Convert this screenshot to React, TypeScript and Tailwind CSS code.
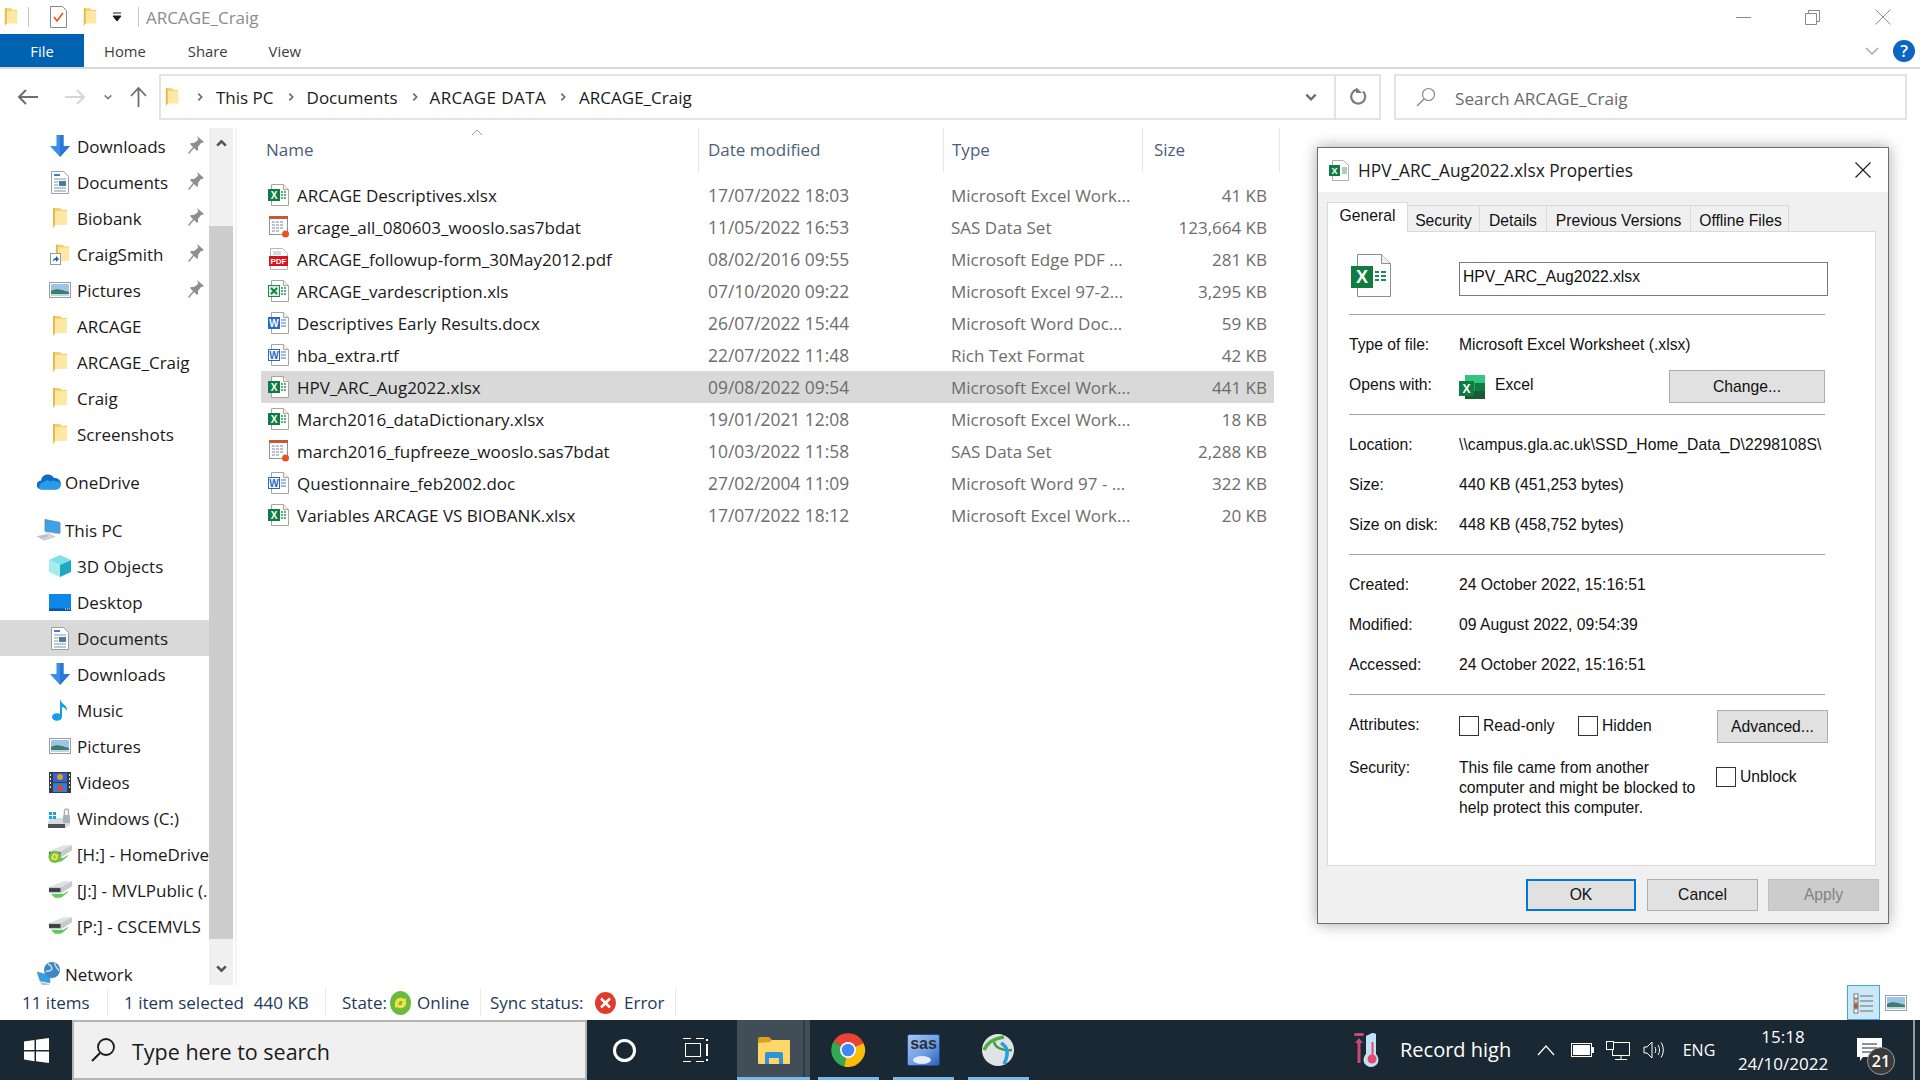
import React from "react";

// ---------- small icons ----------
const Folder = ({ w = 16, h = 22 }: { w?: number; h?: number }) => (
  <svg width={w} height={h} viewBox="0 0 16 22">
    <path d="M1 1h7l2 2h5v15H3l-2 3z" fill="#f5cf6b" />
    <path d="M3 4h12v14H3z" fill="#ffe8a3" />
    <path d="M1 1h2v17l-2 3z" fill="#e8b94a" />
  </svg>
);

const Pin = () => (
  <svg width="18" height="20" viewBox="0 0 18 20">
    <path d="M10 1l7 6-2 1-1 0-3 4 0 3-1 1-3-3-5 6-1-1 5-6-3-3 1-1 3 0 4-3 0-1z" fill="#8f8f8f" />
  </svg>
);

const DownloadArrow = () => (
  <svg width="20" height="22" viewBox="0 0 20 22">
    <path d="M6.5 0h7v11H20L10 22 0 11h6.500z" fill="#3b8fe8" />
    <path d="M10 0h3.500v11H20L10 22z" fill="#2a78d6" />
  </svg>
);

const DocIcon = () => (
  <svg width="18" height="23" viewBox="0 0 18 23">
    <path d="M.5.5h12l5 5v17H.5z" fill="#fff" stroke="#9aa0a8" />
    <path d="M3 8h12M3 17h12M3 20h12" stroke="#7d93ad" />
    <path d="M3 4h6" stroke="#3a7fd5" strokeWidth="2" />
    <rect x="8" y="10" width="7" height="5" fill="#4a7a9c" />
    <path d="M3 11h4M3 14h4" stroke="#7d93ad" />
  </svg>
);

const PictureIcon = ({ w = 22, h = 16 }: { w?: number; h?: number }) => (
  <svg width={w} height={h} viewBox="0 0 22 16">
    <rect x=".5" y=".5" width="21" height="15" fill="#fff" stroke="#9d9d9d" />
    <rect x="2" y="2" width="18" height="12" fill="#9cc6e8" />
    <path d="M2 9c5-3 9-2 18 1v4H2z" fill="#3f7d6a" />
    <path d="M2 12h18v2H2z" fill="#b9d8ec" />
  </svg>
);

const ShortcutFolder = () => (
  <div className="relative w-[20px] h-[22px]">
    <div className="absolute left-[5px] top-0">
      <Folder w={15} h={22} />
    </div>
    <svg className="absolute left-0 bottom-0" width="11" height="12" viewBox="0 0 11 12">
      <rect x=".5" y=".5" width="10" height="11" fill="#fff" stroke="#999" />
      <path d="M3 9c0-3 1-4 3-4V3l3 3-3 3V7c-1 0-2 0-3 2z" fill="#1e5fb4" />
    </svg>
  </div>
);

const Cloud = () => (
  <svg width="24" height="16" viewBox="0 0 24 16">
    <path d="M4.500 15.500a4.500 4.500 0 0 1-.5-9 7 7 0 0 1 13-2.500 5.500 5.500 0 0 1 2 11.500z" fill="#0f6cc0" />
    <path d="M3 15a4 4 0 0 1 1.500-6l6-3 3 1.500a5 5 0 0 1 6 0 4.200 4.200 0 0 1 4 4 4 4 0 0 1-4.500 4H4.500z" fill="#2b9be8" />
  </svg>
);

const Pc = () => (
  <svg width="24" height="22" viewBox="0 0 24 22">
    <path d="M8 .5l15 3v11l-15-2z" fill="#3aa3ea" stroke="#6b8296" strokeWidth=".8" />
    <path d="M8 12.500l15 2 0 1-15-2z" fill="#c7cdd2" />
    <path d="M.5 17.500l11-2.500 6 2.500-10 3.500z" fill="#d4d8dc" stroke="#a3abb3" strokeWidth=".6" />
    <path d="M3 18l7-1.500M4 19l7-2" stroke="#a3abb3" strokeWidth=".6" />
  </svg>
);

const Cube = () => (
  <svg width="22" height="22" viewBox="0 0 22 22">
    <path d="M11 0l11 5-11 5L0 5z" fill="#7fe0e8" />
    <path d="M0 5l11 5v12L0 17z" fill="#a6ecec" />
    <path d="M22 5l-11 5v12l11-5z" fill="#1fa8c6" />
  </svg>
);

const DesktopIcon = () => (
  <svg width="22" height="17" viewBox="0 0 22 17">
    <rect width="22" height="17" fill="#0f86e8" />
    <rect y="14.500" width="22" height="2.500" fill="#0a55a8" />
    <path d="M16 15h1M18 15h1M20 15h1" stroke="#fff" />
  </svg>
);

const Music = () => (
  <svg width="16" height="22" viewBox="0 0 16 22">
    <ellipse cx="5" cy="18" rx="5" ry="3.800" fill="#1b9be8" />
    <path d="M8 18V0c1 5 8 6 7 12-1-3-4-4-5-4v10z" fill="#1b9be8" />
  </svg>
);

const VideoIcon = () => (
  <svg width="22" height="21" viewBox="0 0 22 21">
    <rect width="22" height="21" fill="#3a3a3a" />
    <rect x="4" y="1" width="14" height="9" fill="#2f62d8" />
    <rect x="4" y="11" width="14" height="9" fill="#2f7de0" />
    <circle cx="11" cy="5" r="3" fill="#e0a020" />
    <circle cx="11" cy="16" r="3" fill="#d84a2a" />
    <path d="M1.500 2v2M1.500 6v2M1.500 10v2M1.500 14v2M20.500 2v2M20.500 6v2M20.500 10v2M20.500 14v2" stroke="#eee" />
  </svg>
);

const CDrive = () => (
  <svg width="24" height="21" viewBox="0 0 24 21">
    <path d="M0 14l4-4h18v7l-4 3H0z" fill="#d7dadd" />
    <path d="M0 16h17v4H0z" fill="#4e5257" />
    <rect x="1" y="4" width="3" height="3" fill="#13a2ea" />
    <rect x="5" y="4" width="3" height="3" fill="#13a2ea" />
    <rect x="1" y="8" width="3" height="3" fill="#13a2ea" />
    <rect x="5" y="8" width="3" height="3" fill="#13a2ea" />
    <rect x="15" y="7" width="7" height="8" rx="1" fill="#a8b2bc" />
    <path d="M16.500 7V3a2 2 0 0 1 4 0v4" fill="none" stroke="#a8b2bc" strokeWidth="1.500" />
  </svg>
);

const NetDrive = ({ sync }: { sync?: boolean }) => (
  <svg width="25" height="20" viewBox="0 0 25 20">
    <path d="M1 7L16 1h9v5L14 12H1z" fill="#dfe2e5" />
    <path d="M1 7h13l11-6v5L14 13H1z" fill="#c6cacd" />
    <path d="M1 8h12v4H1z" fill="#3b3e42" />
    <path d="M3 14h13l5-3v1l-6 5-2 1H7z" fill="#62c85f" />
    {sync && (
      <>
        <circle cx="7" cy="13" r="6.500" fill="#72bf44" />
        <path d="M3.500 13a3.500 3.500 0 0 1 6-2.500l1-1v4H7l1.300-1.300a2 2 0 0 0-3.300.800z" fill="#f0e14a" />
        <path d="M10.500 13a3.500 3.500 0 0 1-6 2.500l-1 1v-4H7l-1.300 1.300a2 2 0 0 0 3.300-.800z" fill="#f0e14a" />
      </>
    )}
  </svg>
);

const NetworkIcon = () => (
  <svg width="24" height="24" viewBox="0 0 24 24">
    <path d="M0 10l13 3v8L3 19z" fill="#2f9fea" stroke="#8096a8" strokeWidth=".6" />
    <path d="M3 20l9 2v2l-7-1z" fill="#b9bfc5" />
    <circle cx="15" cy="8" r="8" fill="#3f86c4" />
    <path d="M11 2c3 1 5 4 3 6s-4 0-5 2M18 1c-1 3 2 4 4 8" stroke="#c5dff0" strokeWidth="1.500" fill="none" />
  </svg>
);

const Page = ({ children }: { children: React.ReactNode }) => (
  <svg width="21" height="22" viewBox="0 0 21 22">
    <path d="M3.500.5h12l5 5v16h-17z" fill="#fff" stroke="#a5a5a5" />
    <path d="M15.500.5v5h5" fill="#f3f3f3" stroke="#a5a5a5" />
    {children}
  </svg>
);

const GridLines = ({ color }: { color: string }) => (
  <path d="M13 8h2M16 8h2M13 11h2M16 11h2M13 14h2M16 14h2" stroke={color} strokeWidth="1.500" />
);

const XlsxFile = () => (
  <Page>
    <GridLines color="#2b8a57" />
    <rect x="0" y="5" width="12" height="12" fill="#107c41" />
    <text x="6" y="15" textAnchor="middle" fontSize="10" fontWeight="700" fill="#fff" fontFamily="Liberation Sans">X</text>
  </Page>
);

const XlsFile = () => (
  <Page>
    <GridLines color="#2b8a57" />
    <rect x=".5" y="5.500" width="11" height="11" fill="#d5efdc" stroke="#1d8a4b" />
    <path d="M3 8l6 6M9 8l-6 6" stroke="#107c41" strokeWidth="1.800" />
  </Page>
);

const WordFile = ({ outline }: { outline?: boolean }) => (
  <Page>
    <path d="M13 8h5M13 11h5M13 14h5" stroke="#3a78c9" strokeWidth="1.200" />
    <rect x={outline ? 0.5 : 0} y={outline ? 5.5 : 5} width={outline ? 11 : 12} height={outline ? 11 : 12} fill={outline ? "#fff" : "#2b66c8"} stroke={outline ? "#2b66c8" : "none"} />
    <text x="6" y="15" textAnchor="middle" fontSize="10" fontWeight="700" fill={outline ? "#2b66c8" : "#fff"} fontFamily="Liberation Sans">W</text>
  </Page>
);

const PdfFile = () => (
  <svg width="21" height="22" viewBox="0 0 21 22">
    <path d="M2.500.5h12l5 5v16h-17z" fill="#fff" stroke="#b5b5b5" />
    <path d="M5 4h8M5 6h8" stroke="#b5b5b5" />
    <rect x="1" y="8" width="19" height="10" fill="#d9141e" />
    <text x="10.500" y="16" textAnchor="middle" fontSize="8" fontWeight="700" fill="#fff" fontFamily="Liberation Sans">PDF</text>
  </svg>
);

const SasFile = () => (
  <svg width="21" height="22" viewBox="0 0 21 22">
    <rect x="1.500" y=".5" width="18" height="18" fill="#fff" stroke="#8a93a0" />
    <rect x="1" y="0" width="19" height="3" fill="#c9592e" />
    <path d="M4 6h3M8 6h3M12 6h3M4 9h3M8 9h3M12 9h3M4 12h3M8 12h3M12 12h3M4 15h3M8 15h3" stroke="#7d8794" />
    <circle cx="17.500" cy="18" r="3.500" fill="#e0562a" />
  </svg>
);

const XlsxLarge = () => (
  <svg width="40" height="44" viewBox="0 0 40 44">
    <path d="M6.500.5h24l9 9v33h-33z" fill="#fdfdfd" stroke="#8e8e8e" />
    <path d="M30.500.5v9h9" fill="#f0f0f0" stroke="#8e8e8e" />
    <path d="M24 18h4M30 18h5M24 22h4M30 22h5M24 26h4M30 26h5" stroke="#1f8a55" strokeWidth="2" />
    <rect x="0" y="12" width="22" height="22" fill="#107c41" />
    <text x="11" y="29" textAnchor="middle" fontSize="18" fontWeight="700" fill="#fff" fontFamily="Liberation Sans">X</text>
  </svg>
);

const XlsxTiny = () => (
  <svg width="20" height="21" viewBox="0 0 20 21">
    <path d="M3.500.5h11l5 5v15h-16z" fill="#fff" stroke="#b0b0b0" />
    <path d="M13 7h5v7h-5z" fill="#b5c9bc" />
    <rect x="0" y="5" width="11" height="11" fill="#107c41" />
    <text x="5.500" y="14" textAnchor="middle" fontSize="9" fontWeight="700" fill="#fff" fontFamily="Liberation Sans">X</text>
  </svg>
);

const ExcelApp = () => (
  <svg width="26" height="24" viewBox="0 0 26 24">
    <path d="M6 0h20v8H6z" fill="#33c481" />
    <path d="M6 8h20v8H6z" fill="#21a366" />
    <path d="M6 16h20v8H6z" fill="#185c37" />
    <path d="M16 8h10v8H16z" fill="#107c41" />
    <rect x="0" y="6" width="15" height="15" fill="#107c41" />
    <text x="7.500" y="18" textAnchor="middle" fontSize="12" fontWeight="700" fill="#fff" fontFamily="Liberation Sans">X</text>
  </svg>
);

const SyncBadge = () => (
  <svg width="21" height="24" viewBox="0 0 21 24">
    <ellipse cx="10.500" cy="12" rx="10.500" ry="12" fill="#6cbb3c" />
    <path d="M5 12a5.500 5.500 0 0 1 9-4l2-1v6h-5l2-2a3 3 0 0 0-5 1z" fill="#f4e24a" />
    <path d="M16 12a5.500 5.500 0 0 1-9 4l-2 1v-6h5l-2 2a3 3 0 0 0 5-1z" fill="#f4e24a" />
  </svg>
);

const ErrorBadge = () => (
  <svg width="21" height="22" viewBox="0 0 21 22">
    <ellipse cx="10.500" cy="11" rx="10.500" ry="11" fill="#e23b2e" />
    <path d="M6 6.500l9 9M15 6.500l-9 9" stroke="#fff" strokeWidth="2.500" />
  </svg>
);

const Chev = ({ d, color = "#6b6b6b", w = 12, h = 12, sw = 2 }: { d: string; color?: string; w?: number; h?: number; sw?: number }) => (
  <svg width={w} height={h} viewBox="0 0 12 12" preserveAspectRatio="none">
    <path d={d} fill="none" stroke={color} strokeWidth={sw} />
  </svg>
);
const DOWN = "M2 4l4 4 4-4";
const UP = "M2 8l4-4 4 4";
const RIGHT = "M4 2l4 4-4 4";

// ---------- data ----------
type NavItem = { label: string; icon: React.ReactNode; top?: boolean; pin?: boolean; active?: boolean };

const quick: NavItem[] = [
  { label: "Downloads", icon: <DownloadArrow />, pin: true },
  { label: "Documents", icon: <DocIcon />, pin: true },
  { label: "Biobank", icon: <Folder />, pin: true },
  { label: "CraigSmith", icon: <ShortcutFolder />, pin: true },
  { label: "Pictures", icon: <PictureIcon />, pin: true },
  { label: "ARCAGE", icon: <Folder /> },
  { label: "ARCAGE_Craig", icon: <Folder /> },
  { label: "Craig", icon: <Folder /> },
  { label: "Screenshots", icon: <Folder /> },
];

const thisPc: NavItem[] = [
  { label: "This PC", icon: <Pc />, top: true },
  { label: "3D Objects", icon: <Cube /> },
  { label: "Desktop", icon: <DesktopIcon /> },
  { label: "Documents", icon: <DocIcon />, active: true },
  { label: "Downloads", icon: <DownloadArrow /> },
  { label: "Music", icon: <Music /> },
  { label: "Pictures", icon: <PictureIcon /> },
  { label: "Videos", icon: <VideoIcon /> },
  { label: "Windows (C:)", icon: <CDrive /> },
  { label: "[H:] - HomeDrive", icon: <NetDrive sync /> },
  { label: "[J:] - MVLPublic (.", icon: <NetDrive /> },
  { label: "[P:] - CSCEMVLS", icon: <NetDrive /> },
];

const files = [
  { name: "ARCAGE Descriptives.xlsx", date: "17/07/2022 18:03", type: "Microsoft Excel Work...", size: "41 KB", icon: <XlsxFile /> },
  { name: "arcage_all_080603_wooslo.sas7bdat", date: "11/05/2022 16:53", type: "SAS Data Set", size: "123,664 KB", icon: <SasFile /> },
  { name: "ARCAGE_followup-form_30May2012.pdf", date: "08/02/2016 09:55", type: "Microsoft Edge PDF ...", size: "281 KB", icon: <PdfFile /> },
  { name: "ARCAGE_vardescription.xls", date: "07/10/2020 09:22", type: "Microsoft Excel 97-2...", size: "3,295 KB", icon: <XlsFile /> },
  { name: "Descriptives Early Results.docx", date: "26/07/2022 15:44", type: "Microsoft Word Doc...", size: "59 KB", icon: <WordFile /> },
  { name: "hba_extra.rtf", date: "22/07/2022 11:48", type: "Rich Text Format", size: "42 KB", icon: <WordFile outline /> },
  { name: "HPV_ARC_Aug2022.xlsx", date: "09/08/2022 09:54", type: "Microsoft Excel Work...", size: "441 KB", icon: <XlsxFile />, selected: true },
  { name: "March2016_dataDictionary.xlsx", date: "19/01/2021 12:08", type: "Microsoft Excel Work...", size: "18 KB", icon: <XlsxFile /> },
  { name: "march2016_fupfreeze_wooslo.sas7bdat", date: "10/03/2022 11:58", type: "SAS Data Set", size: "2,288 KB", icon: <SasFile /> },
  { name: "Questionnaire_feb2002.doc", date: "27/02/2004 11:09", type: "Microsoft Word 97 - ...", size: "322 KB", icon: <WordFile outline /> },
  { name: "Variables ARCAGE VS BIOBANK.xlsx", date: "17/07/2022 18:12", type: "Microsoft Excel Work...", size: "20 KB", icon: <XlsxFile /> },
];

// ---------- parts ----------
const TitleBar = () => (
  <div className="h-[34px] flex items-center relative">
    <div className="ml-[4px] w-[24px]"><Folder w={14} h={20} /></div>
    <div className="w-px h-[20px] bg-[#c8c8c8]" />
    <div className="ml-[21px] w-[33px]">
      <svg width="17" height="22" viewBox="0 0 17 22">
        <path d="M.5.5h12l4 4v17H.5z" fill="#fff" stroke="#8a8a8a" />
        <path d="M4 11l3 4 6-8" fill="none" stroke="#e8501e" strokeWidth="1.600" />
      </svg>
    </div>
    <div className="w-[24px]"><Folder w={14} h={20} /></div>
    <svg className="ml-[5px]" width="10" height="10" viewBox="0 0 10 10">
      <path d="M1 1h8M1 4h8l-4 5z" fill="#1a1a1a" stroke="#1a1a1a" strokeWidth="1" />
    </svg>
    <div className="ml-[16px] w-px h-[20px] bg-[#c8c8c8]" />
    <span className="ml-[7px] pt-[2px] text-[#8c8c8c]">ARCAGE_Craig</span>
    <div className="ml-auto flex items-center pr-[29px]">
      <div className="w-[15px] h-px bg-[#8a8a8a] mr-[54px]" />
      <svg className="mr-[55px]" width="15" height="15" viewBox="0 0 15 15">
        <path d="M.5 3.500h11v11H.5zM3.500 3.500v-3h11v11h-3" fill="none" stroke="#8a8a8a" />
      </svg>
      <svg width="16" height="16" viewBox="0 0 16 16">
        <path d="M.5.500l15 15M15.500.5l-15 15" stroke="#8a8a8a" />
      </svg>
    </div>
  </div>
);

const Ribbon = () => (
  <div className="h-[35px] flex items-stretch border-b-2 border-[#d9d9d9] text-[14.800px] text-[#3c3c3c]">
    <div className="w-[84px] bg-[#0063b1] text-white flex items-center justify-center pt-[1px]">File</div>
    <div className="ml-[20px] flex items-center pt-[1px]">Home</div>
    <div className="ml-[42px] flex items-center pt-[1px]">Share</div>
    <div className="ml-[41px] flex items-center pt-[1px]">View</div>
    <div className="ml-auto flex items-center pr-[5px]">
      <Chev d={DOWN} color="#a9a9a9" w={18} h={18} sw={1} />
      <div className="ml-[12px] w-[22px] h-[22px] rounded-full bg-[#0a66c2] text-white text-[17px] font-semibold flex items-center justify-center">?</div>
    </div>
  </div>
);

const AddressRow = () => (
  <div className="h-[59px] pt-[5px] flex items-start">
    <div className="w-[159px] h-[46px] flex items-center relative">
      <svg className="ml-[18px]" width="20" height="16" viewBox="0 0 20 16">
        <path d="M8 1L1 8l7 7M1 8h19" fill="none" stroke="#6e6e6e" strokeWidth="2" />
      </svg>
      <svg className="ml-[27px]" width="20" height="16" viewBox="0 0 20 16">
        <path d="M12 1l7 7-7 7M19 8H0" fill="none" stroke="#d6d6d6" strokeWidth="2" />
      </svg>
      <div className="ml-[18px]"><Chev d={DOWN} color="#808080" w={10} h={10} /></div>
      <svg className="ml-[17px]" width="17" height="20" viewBox="0 0 17 20">
        <path d="M1 9l7.500-8L16 9M8.500 1v19" fill="none" stroke="#6e6e6e" strokeWidth="1.800" />
      </svg>
    </div>
    <div className="w-[1222px] h-[46px] border-2 border-[#e3e3e3] flex items-center">
      <div className="flex-1 flex items-center pl-[4px] text-[#1a1a1a]">
        <Folder w={14} h={20} />
        <div className="ml-[16px]"><Chev d={RIGHT} w={10} h={10} /></div>
        <span className="ml-[11px] pt-[2px]">This PC</span>
        <div className="ml-[12px]"><Chev d={RIGHT} w={10} h={10} /></div>
        <span className="ml-[11px] pt-[2px]">Documents</span>
        <div className="ml-[12px]"><Chev d={RIGHT} w={10} h={10} /></div>
        <span className="ml-[10px] pt-[2px] tracking-[0.4px]">ARCAGE DATA</span>
        <div className="ml-[12px]"><Chev d={RIGHT} w={10} h={10} /></div>
        <span className="ml-[11px] pt-[2px]">ARCAGE_Craig</span>
      </div>
      <div className="w-[30px] flex justify-start"><Chev d={DOWN} color="#6b6b6b" w={14} h={14} /></div>
      <div className="w-[45px] self-stretch border-l-2 border-[#e3e3e3] pl-[2px] flex items-center justify-center">
        <svg width="18" height="18" viewBox="0 0 18 18">
          <path d="M13 3.500a7 7 0 1 1-6-1.800" fill="none" stroke="#7b7b7b" strokeWidth="2.200" />
          <path d="M6 0v6h6z" fill="#7b7b7b" transform="translate(0 -1)" />
        </svg>
      </div>
    </div>
    <div className="ml-[13px] w-[513px] h-[46px] border-2 border-[#e3e3e3] flex items-center pl-[20px] text-[#6a6a6a]">
      <svg width="20" height="20" viewBox="0 0 20 20">
        <circle cx="12.500" cy="7.500" r="6" fill="none" stroke="#8a8a8a" strokeWidth="1.200" />
        <path d="M8 12l-7 7" stroke="#8a8a8a" strokeWidth="1.400" />
      </svg>
      <span className="ml-[19px] pt-[3px] text-[17.200px]">Search ARCAGE_Craig</span>
    </div>
  </div>
);

const NavRow = ({ item }: { item: NavItem }) => (
  <div className={`h-[36px] w-full flex items-center relative ${item.active ? "bg-[#d9d9d9]" : ""}`}>
    <div className={`shrink-0 flex justify-center ${item.top ? "ml-[36px] w-[25px] mr-[4px]" : "ml-[48px] w-[24px] mr-[5px]"}`}>{item.icon}</div>
    <span className="whitespace-nowrap overflow-hidden flex-1 pt-[2px] text-[#1a1a1a]">{item.label}</span>
    {item.pin && (
      <div className="absolute left-[187px] top-[7px]"><Pin /></div>
    )}
  </div>
);

const Sidebar = () => (
  <div className="w-[233px] flex shrink-0">
    <div className="w-[209px] overflow-hidden">
      {quick.map((n) => <NavRow key={n.label} item={n} />)}
      <div className="h-[12px]" />
      <NavRow item={{ label: "OneDrive", icon: <Cloud />, top: true }} />
      <div className="h-[12px]" />
      {thisPc.map((n) => <NavRow key={n.label} item={n} />)}
      <div className="h-[12px]" />
      <NavRow item={{ label: "Network", icon: <NetworkIcon />, top: true }} />
    </div>
    <div className="w-[24px] bg-[#f0f0f0] flex flex-col">
      <div className="h-[98px] flex justify-center pt-[9px]"><Chev d={UP} color="#555555" w={13} h={13} sw={2.4} /></div>
      <div className="h-[713px] bg-[#cdcdcd]" />
      <div className="flex-1 flex justify-center pt-[23px]"><Chev d={DOWN} color="#555555" w={13} h={13} sw={2.4} /></div>
    </div>
  </div>
);

const FilePane = () => (
  <div className="flex-1 ml-[2px] border-l-2 border-[#f4f4f4]">
    <div className="h-[44px] flex text-[#4c607a] relative">
      <div className="w-[461px] pl-[29px] flex items-center">Name</div>
      <div className="w-[245px] pl-[9px] flex items-center border-l border-[#e5e5e5]">Date modified</div>
      <div className="w-[199px] pl-[8px] flex items-center border-l border-[#e5e5e5]">Type</div>
      <div className="w-[138px] pl-[11px] flex items-center border-x border-[#e5e5e5]">Size</div>
      <div className="absolute left-[234px] top-0">
        <svg width="12" height="8" viewBox="0 0 12 8"><path d="M1 7l5-5 5 5" fill="none" stroke="#a0a0a0" /></svg>
      </div>
    </div>
    <div className="pt-[7px] ml-[24px] w-[1013px]">
      {files.map((f) => (
        <div key={f.name} className={`h-[32px] flex items-center ${f.selected ? "bg-[#d9d9d9]" : ""}`}>
          <div className="w-[447px] pl-[7px] flex items-center">
            <div className="w-[21px] shrink-0">{f.icon}</div>
            <span className="ml-[8px] pt-[1px] whitespace-nowrap text-[#1a1a1a]">{f.name}</span>
          </div>
          <div className="w-[243px] pt-[1px] whitespace-nowrap text-[#6d6d6d] text-[17.400px]">{f.date}</div>
          <div className="w-[200px] pt-[1px] whitespace-nowrap text-[#6d6d6d]">{f.type}</div>
          <div className="w-[123px] pt-[1px] pr-[7px] text-right whitespace-nowrap text-[#6d6d6d]">{f.size}</div>
        </div>
      ))}
    </div>
  </div>
);

const StatusBar = () => (
  <div className="h-[35px] flex items-center text-[#1e395b]">
    <div className="w-[108px] pl-[22px] pt-[1px] border-r border-[#e9e9e9]">11 items</div>
    <div className="w-[218px] pl-[16px] pt-[1px] border-r border-[#e9e9e9] whitespace-nowrap">1 item selected<span className="ml-[10px]">440 KB</span></div>
    <div className="w-[155px] pl-[16px] border-r border-[#e9e9e9] flex items-center">
      <span className="w-[48px] pt-[1px]">State:</span>
      <SyncBadge />
      <span className="ml-[6px] pt-[1px]">Online</span>
    </div>
    <div className="w-[195px] pl-[9px] border-r border-[#e9e9e9] flex items-center">
      <span className="w-[105px] pt-[1px] whitespace-nowrap">Sync status:</span>
      <ErrorBadge />
      <span className="ml-[8px] pt-[1px]">Error</span>
    </div>
    <div className="ml-auto flex items-center pr-[13px] self-stretch">
      <div className="w-[33px] h-[35px] bg-[#cce8f6] border border-[#4aa3e0] flex items-center justify-center">
        <svg width="22" height="22" viewBox="0 0 22 22">
          <path d="M7 4h13M7 9h13M7 14h13M7 19h13" stroke="#6a6a6a" strokeWidth="1" />
          <rect x="1" y="2" width="4" height="4" fill="#fff" stroke="#777" />
          <rect x="1" y="7" width="4" height="4" fill="#e8d6a0" stroke="#777" />
          <rect x="1" y="12" width="4" height="4" fill="#c8502a" stroke="#777" />
          <rect x="1" y="17" width="4" height="4" fill="#fff" stroke="#777" />
        </svg>
      </div>
      <div className="ml-[5px]"><PictureIcon /></div>
    </div>
  </div>
);

const Cell = ({ w, children }: { w: string; children: React.ReactNode }) => (
  <div className={`${w} h-full flex items-center justify-center`}>{children}</div>
);

const Underline = ({ className }: { className: string }) => (
  <div className={`absolute bottom-0 h-[3px] bg-[#76b9ed] ${className}`} />
);

const Taskbar = () => (
  <div className="h-[60px] bg-[#1a2833] flex text-white">
    <Cell w="w-[72px]">
      <svg width="25" height="25" viewBox="0 0 25 25">
        <path d="M0 3.500l10.500-1.500v10H0zM12 1.800L25 0v12H12zM0 13.500h10.500v9.700L0 21.500zM12 13.500h13V25l-13-1.800z" fill="#fff" />
      </svg>
    </Cell>
    <div className="w-[515px] bg-[#f0f0f0] border-2 border-[#b4b4b4] flex items-center pl-[16px] text-[#1a1a1a] text-[21.500px]">
      <svg width="26" height="26" viewBox="0 0 26 26">
        <circle cx="16" cy="10" r="8" fill="none" stroke="#1a1a1a" strokeWidth="1.800" />
        <path d="M10 16l-8 8" stroke="#1a1a1a" strokeWidth="2" />
      </svg>
      <span className="ml-[16px] pt-[4px]">Type here to search</span>
    </div>
    <Cell w="w-[75px]">
      <div className="w-[23px] h-[23px] rounded-full border-[3px] border-white" />
    </Cell>
    <Cell w="w-[75px]">
      <svg className="mr-[8px]" width="26" height="24" viewBox="0 0 26 24">
        <path d="M0 .500h8M13 .500h8M0 23.500h8M13 23.500h8" stroke="#fff" />
        <rect x="2.500" y="5.500" width="15" height="13" fill="none" stroke="#fff" />
        <path d="M24 1v2M24 6v12M24 21v2" stroke="#fff" strokeWidth="2" />
      </svg>
    </Cell>
    <div className="w-[73px] h-full bg-[#414e57] relative flex items-center justify-center">
      <svg width="32" height="27" viewBox="0 0 32 27">
        <path d="M0 2a2 2 0 0 1 2-2h9l3 3h18v23H0z" fill="#dca01b" />
        <path d="M0 6l12-1 2-2h18v23a1 1 0 0 1-1 1H1a1 1 0 0 1-1-1z" fill="#ffd768" />
        <path d="M7 27V17a2 2 0 0 1 2-2h14a2 2 0 0 1 2 2v10h-4v-6H11v6z" fill="#2f92dc" />
      </svg>
      <div className="absolute right-[5px] top-0 bottom-0 w-[2px] bg-[#2e3b45]" />
      <Underline className="left-0 right-0" />
    </div>
    <div className="w-[76px] h-full relative flex items-center justify-center">
      <svg width="36" height="36" viewBox="0 0 36 36">
        <path d="M18 18L3.500 9.500A17 17 0 0 1 33.500 11z" fill="#ea4335" />
        <path d="M18 18L3.500 9.500A17 17 0 0 0 14 34.500z" fill="#34a853" />
        <path d="M18 18L33.500 11A17 17 0 0 1 14 34.500z" fill="#fbbc05" />
        <circle cx="18" cy="18" r="8" fill="#fff" />
        <circle cx="18" cy="18" r="6.300" fill="#4285f4" />
      </svg>
      <Underline className="left-[8px] w-[61px]" />
    </div>
    <div className="w-[74px] h-full relative flex items-center justify-center">
      <svg width="33" height="32" viewBox="0 0 33 32">
        <defs>
          <linearGradient id="sasBg" x1="0" y1="0" x2="1" y2="1">
            <stop offset="0" stopColor="#a9c6ef" />
            <stop offset=".55" stopColor="#6f9fe6" />
            <stop offset="1" stopColor="#2a5fb8" />
          </linearGradient>
        </defs>
        <rect x=".5" y=".5" width="32" height="31" rx="2" fill="url(#sasBg)" stroke="#1c4a94" />
        <ellipse cx="15" cy="26" rx="9" ry="4" fill="#e3eefc" />
        <text x="16.500" y="15" textAnchor="middle" fontSize="16" fontWeight="700" fill="#2a2f38" fontFamily="Liberation Sans">sas</text>
      </svg>
      <Underline className="left-[7px] w-[61px]" />
    </div>
    <div className="w-[76px] h-full relative flex items-center justify-center">
      <svg width="32" height="32" viewBox="0 0 32 32">
        <circle cx="16" cy="16" r="16" fill="#dfe3e5" />
        <path d="M2 16C6 7 14 4 22 3" fill="none" stroke="#52ab47" strokeWidth="3.500" />
        <path d="M12 8c1 5 7 9 18 8" fill="none" stroke="#3f9c42" strokeWidth="2.500" />
        <path d="M19 9c7 4 8 11 3 21" fill="none" stroke="#27a0dc" strokeWidth="3.500" />
      </svg>
      <Underline className="left-[8px] w-[61px]" />
    </div>
    <div className="ml-auto w-[566px] flex items-center">
      <Cell w="w-[46px]">
        <svg className="mr-[18px]" width="28" height="38" viewBox="0 0 28 38">
          <rect x="0" y="2" width="10" height="3" rx="1.500" fill="#c94a78" />
          <path d="M5 7l4 5H6.500v20h-3V12H1z" fill="#c94a78" />
          <path d="M16 3a5 5 0 0 1 6 0v20a7.500 7.500 0 1 1-10 0V5z" fill="#bfe2f5" />
          <path d="M17.500 11h2v16h-2z" fill="#e84a6c" />
          <circle cx="18" cy="28" r="4.500" fill="#e84a6c" />
        </svg>
      </Cell>
      <div className="w-[131px] text-[20px] whitespace-nowrap">Record high</div>
      <Cell w="w-[30px]">
        <svg width="18" height="11" viewBox="0 0 18 11"><path d="M1 10l8-9 8 9" fill="none" stroke="#fff" strokeWidth="1.200" /></svg>
      </Cell>
      <Cell w="w-[42px]">
        <svg width="23" height="14" viewBox="0 0 23 14">
          <rect x=".5" y=".5" width="20" height="13" fill="none" stroke="#fff" />
          <rect x="2" y="2" width="17" height="10" fill="#fff" />
          <rect x="21" y="4" width="2" height="6" fill="#fff" />
        </svg>
      </Cell>
      <Cell w="w-[30px]">
        <svg width="24" height="19" viewBox="0 0 24 19">
          <rect x="6.500" y="1.500" width="17" height="13" fill="none" stroke="#fff" />
          <rect x=".5" y=".5" width="7" height="8" fill="#1a2833" stroke="#fff" />
          <path d="M15 15v3M9 18.500h12" stroke="#fff" />
        </svg>
      </Cell>
      <Cell w="w-[42px]">
        <svg width="22" height="18" viewBox="0 0 22 18">
          <path d="M1 6h3l5-5v16l-5-5H1z" fill="none" stroke="#fff" />
          <path d="M12 6c1 2 1 4 0 6M15 4c2 3 2 7 0 10M18 1.500c3 4 3 11 0 15" fill="none" stroke="#fff" />
        </svg>
      </Cell>
      <div className="w-[50px] h-full flex items-center justify-center pr-[2px] text-[16px]">ENG</div>
      <div className="w-[116px] h-full flex flex-col items-center justify-center text-[17px] leading-[27px] whitespace-nowrap">
        <span>15:18</span>
        <span>24/10/2022</span>
      </div>
      <div className="w-[71px] h-full relative">
        <svg className="absolute left-[16px] top-[18px]" width="25" height="24" viewBox="0 0 25 24">
          <path d="M0 0h25v19H6l-3 4v-4H0z" fill="#fff" />
          <path d="M5 6h15M5 10h15M5 14h15" stroke="#1a2833" />
        </svg>
        <div className="absolute left-[26px] top-[27px] w-[28px] h-[28px] rounded-full bg-[#3a3a3a] border border-[#9a9a9a] flex items-center justify-center text-[16px] font-semibold">21</div>
      </div>
      <div className="ml-[1px] w-[2px] h-full bg-[#9a9a9a]" />
    </div>
  </div>
);

const Sep = ({ mt }: { mt: string }) => <div className={`${mt} w-[476px] h-px bg-[#a0a0a0]`} />;

const PropRow = ({ label, className, children }: { label: string; className?: string; children: React.ReactNode }) => (
  <div className={`flex h-[20px] pt-[2px] items-center ${className ?? ""}`}>
    <div className="w-[110px] shrink-0">{label}</div>
    {children}
  </div>
);

const WinBtn = ({ className, children }: { className: string; children: React.ReactNode }) => (
  <div className={`flex items-center justify-center border ${className}`}>{children}</div>
);

const Check = () => <div className="w-[20px] h-[20px] border border-[#333333] bg-white shrink-0" />;

const PropertiesDialog = () => (
  <div className="absolute left-[1317px] top-[147px] w-[572px] h-[777px] border border-[#6e6e6e] bg-[#f0f0f0] shadow-[0_0_14px_rgba(0,0,0,0.35)] flex flex-col font-['Liberation_Sans',Arial,sans-serif] text-[15.700px] text-[#111111]">
    <div className="h-[44px] bg-white flex items-center pl-[11px] font-['Open_Sans',sans-serif] text-[17.300px]">
      <XlsxTiny />
      <span className="ml-[9px] pt-[2px] text-[#1a1a1a]">HPV_ARC_Aug2022.xlsx Properties</span>
      <svg className="ml-auto mr-[17px]" width="16" height="16" viewBox="0 0 16 16">
        <path d="M.5.5l15 15M15.500.5l-15 15" stroke="#1a1a1a" strokeWidth="1.100" />
      </svg>
    </div>
    <div className="flex-1 pt-[10px] pl-[9px] pr-[12px]">
      <div className="h-[29px] flex items-end relative z-10">
        <div className="w-[81px] h-[30px] -mb-px bg-white border border-b-0 border-[#d9d9d9] flex items-center justify-center pb-[3px]">General</div>
        <div className="w-[72px] h-[26px] pt-[4px] border-t border-r border-[#d9d9d9] flex items-center justify-center">Security</div>
        <div className="w-[67px] h-[26px] pt-[4px] border-t border-r border-[#d9d9d9] flex items-center justify-center">Details</div>
        <div className="w-[144px] h-[26px] pt-[4px] border-t border-r border-[#d9d9d9] flex items-center justify-center">Previous Versions</div>
        <div className="w-[98px] h-[26px] pt-[4px] pl-[2px] border-t border-r border-[#d9d9d9] flex items-center justify-center">Offline Files</div>
      </div>
      <div className="h-[635px] bg-white border border-[#d9d9d9] pl-[21px] relative">
        <div className="mt-[30px] flex h-[34px] items-center">
          <div className="w-[110px] shrink-0 pl-[2px] -mt-[7px]"><XlsxLarge /></div>
          <div className="w-[369px] h-[34px] border border-[#7a7a7a] flex items-center pl-[3px] pb-[4px]">HPV_ARC_Aug2022.xlsx</div>
        </div>
        <Sep mt="mt-[18px]" />
        <PropRow label="Type of file:" className="mt-[19px]"><span>Microsoft Excel Worksheet (.xlsx)</span></PropRow>
        <div className="mt-[16px] flex h-[33px] items-start w-[476px]">
          <div className="w-[110px] pt-[5px] leading-[20px]">Opens with:</div>
          <div className="pt-[5px]"><ExcelApp /></div>
          <div className="ml-[10px] pt-[5px] leading-[20px]">Excel</div>
          <WinBtn className="ml-auto w-[156px] h-[33px] bg-[#e1e1e1] border-[#adadad]">Change...</WinBtn>
        </div>
        <Sep mt="mt-[11px]" />
        <PropRow label="Location:" className="mt-[19px]">
          <div className="w-[368px] overflow-hidden whitespace-nowrap tracking-[0.05px]">\\campus.gla.ac.uk\SSD_Home_Data_D\2298108S\</div>
        </PropRow>
        <PropRow label="Size:" className="mt-[20px]"><span>440 KB (451,253 bytes)</span></PropRow>
        <PropRow label="Size on disk:" className="mt-[20px]"><span>448 KB (458,752 bytes)</span></PropRow>
        <Sep mt="mt-[20px]" />
        <PropRow label="Created:" className="mt-[19px]"><span>24 October 2022, 15:16:51</span></PropRow>
        <PropRow label="Modified:" className="mt-[20px]"><span>09 August 2022, 09:54:39</span></PropRow>
        <PropRow label="Accessed:" className="mt-[20px]"><span>24 October 2022, 15:16:51</span></PropRow>
        <Sep mt="mt-[20px]" />
        <div className="mt-[15px] flex h-[33px] items-start">
          <div className="w-[110px] pt-[5px] leading-[20px]">Attributes:</div>
          <div className="pt-[6px] flex items-center leading-[20px]">
            <Check /><span className="ml-[4px] w-[95px]">Read-only</span>
            <Check /><span className="ml-[4px]">Hidden</span>
          </div>
          <WinBtn className="absolute left-[389px] w-[111px] h-[33px] bg-[#e1e1e1] border-[#adadad]">Advanced...</WinBtn>
        </div>
        <div className="mt-[14px] flex items-start leading-[20px]">
          <div className="w-[110px] pt-[1px]">Security:</div>
          <div className="w-[257px] pt-[1px]">This file came from another computer and might be blocked to help protect this computer.</div>
          <div className="pt-[9px] flex items-center">
            <Check /><span className="ml-[4px] pt-[1px]">Unblock</span>
          </div>
        </div>
      </div>
      <div className="mt-[13px] -mr-[3px] flex justify-end">
        <WinBtn className="w-[110px] h-[32px] bg-[#e1e1e1] !border-2 border-[#0078d7]">OK</WinBtn>
        <WinBtn className="ml-[11px] w-[111px] h-[32px] bg-[#e1e1e1] border-[#adadad]">Cancel</WinBtn>
        <WinBtn className="ml-[10px] w-[111px] h-[32px] bg-[#cccccc] border-[#bfbfbf] text-[#838383]">Apply</WinBtn>
      </div>
    </div>
  </div>
);

export default function App() {
  return (
    <div className="w-[1920px] h-[1080px] relative overflow-hidden bg-white flex flex-col font-['Open_Sans',sans-serif] text-[17px]">
      <TitleBar />
      <Ribbon />
      <AddressRow />
      <div className="h-[857px] flex">
        <Sidebar />
        <FilePane />
      </div>
      <StatusBar />
      <Taskbar />
      <PropertiesDialog />
    </div>
  );
}
